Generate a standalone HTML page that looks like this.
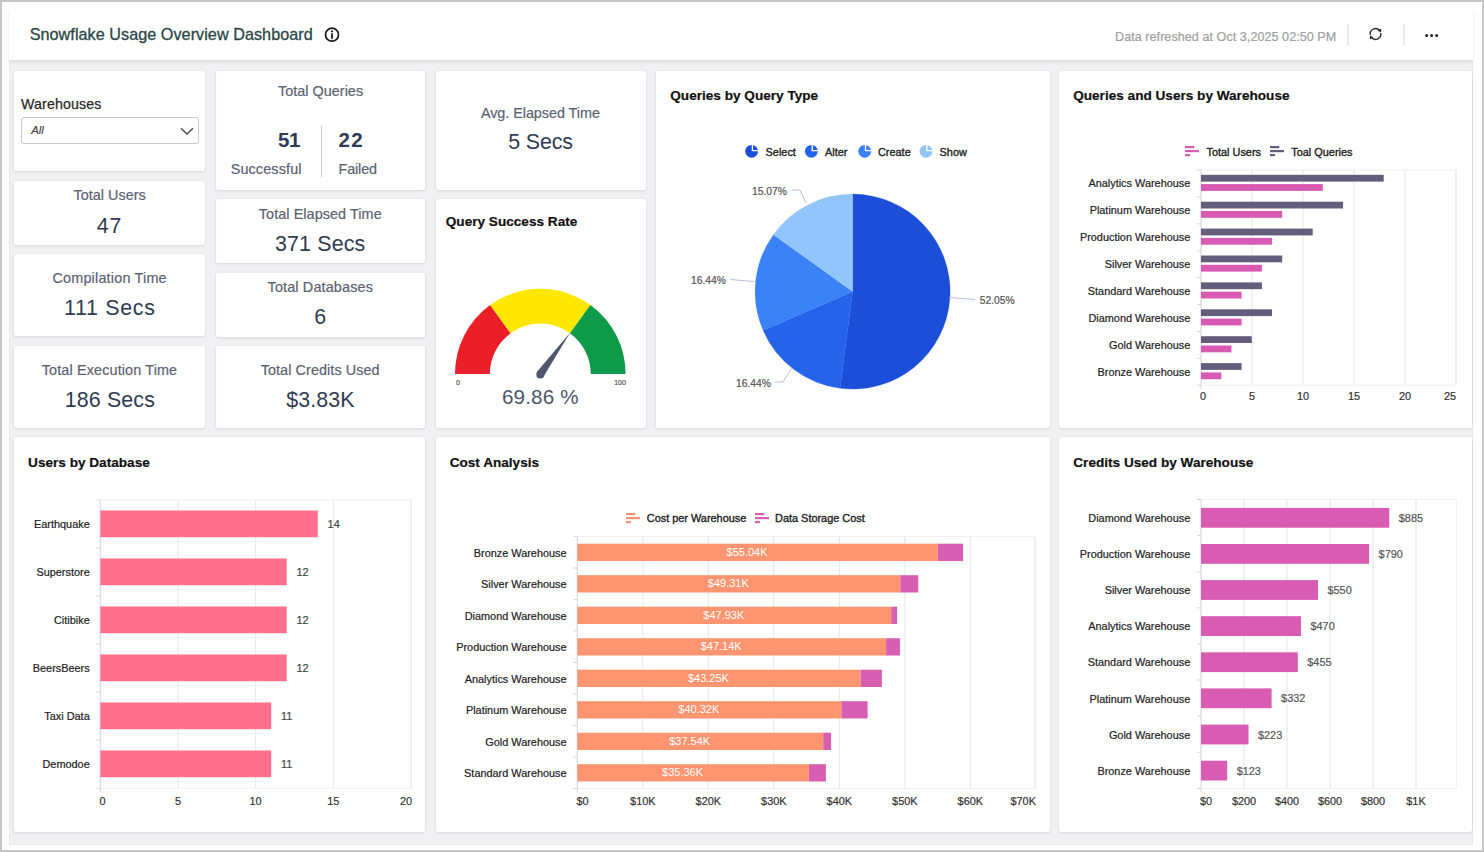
<!DOCTYPE html><html><head><meta charset="utf-8"><style>
html,body{margin:0;padding:0;}
body{width:1484px;height:852px;position:relative;overflow:hidden;background:#fff;font-family:"Liberation Sans", sans-serif;}
.frame{position:absolute;left:0;top:0;width:1480px;height:848px;border:2px solid #c6c6c6;}
.cont{position:absolute;left:9px;top:9px;width:1464px;height:836px;background:#f1f1f4;border:1px solid #e9e9eb;box-sizing:border-box;}
.hdr{position:absolute;left:9px;top:9px;width:1464px;height:51px;background:#fff;box-shadow:0 2px 3px rgba(0,0,0,0.10);}
.card{position:absolute;background:#fff;border-radius:2px;box-shadow:0 1px 3px rgba(0,0,0,0.10),0 0 1px rgba(0,0,0,0.08);}
.t{position:absolute;white-space:nowrap;line-height:1;z-index:2;-webkit-text-stroke:0.2px currentColor;}
svg{position:absolute;left:0;top:0;z-index:1;}
</style></head><body>
<div class="frame"></div>
<div class="cont"></div>
<div class="hdr"></div>

<div class="card" style="left:13.5px;top:71px;width:191.7px;height:100px"></div>
<div class="card" style="left:13.5px;top:181px;width:191.7px;height:64px"></div>
<div class="card" style="left:13.5px;top:254px;width:191.7px;height:82px"></div>
<div class="card" style="left:13.5px;top:346px;width:191.7px;height:82px"></div>
<div class="card" style="left:215.5px;top:71px;width:209.7px;height:118.6px"></div>
<div class="card" style="left:215.5px;top:199px;width:209.7px;height:64px"></div>
<div class="card" style="left:215.5px;top:273px;width:209.7px;height:64px"></div>
<div class="card" style="left:215.5px;top:346px;width:209.7px;height:82px"></div>
<div class="card" style="left:435.5px;top:71px;width:210.0px;height:118.6px"></div>
<div class="card" style="left:435.5px;top:199px;width:210.0px;height:229px"></div>
<div class="card" style="left:655.5px;top:71px;width:394.0px;height:357px"></div>
<div class="card" style="left:1059px;top:71px;width:412.5px;height:357px"></div>
<div class="card" style="left:13.5px;top:437px;width:411.7px;height:394.5px"></div>
<div class="card" style="left:435.5px;top:437px;width:614.0px;height:394.5px"></div>
<div class="card" style="left:1059px;top:437px;width:412.5px;height:394.5px"></div>
<div class="t" style="left:29.7px;top:26.0px;font-size:16.2px;color:#2b4645;font-weight:400;font-style:normal;letter-spacing:0.042px;-webkit-text-stroke:0.3px #2b4645">Snowflake Usage Overview Dashboard</div>
<div class="t" style="left:1115.0px;top:30.5px;font-size:12.6px;color:#a0a0a0;font-weight:400;font-style:normal;letter-spacing:0.041px;">Data refreshed at Oct 3,2025 02:50 PM</div>
<div class="t" style="left:21.1px;top:97.1px;font-size:14.2px;color:#2a2a2a;font-weight:400;font-style:normal;letter-spacing:0.131px;-webkit-text-stroke:0.25px #2a2a2a">Warehouses</div>
<div style="position:absolute;left:21.2px;top:117.4px;width:177.4px;height:26.9px;box-sizing:border-box;border:1px solid #c9c9c9;border-radius:3px;background:#fff"></div>
<div class="t" style="left:31.2px;top:125.2px;font-size:11.4px;color:#444;font-weight:400;font-style:italic;">All</div>
<div class="t" style="left:-190.4px;width:600px;text-align:center;top:188.4px;font-size:14.4px;color:#5b6272;font-weight:400;font-style:normal;letter-spacing:0.042px;">Total Users</div>
<div class="t" style="left:-190.6px;width:600px;text-align:center;top:215.5px;font-size:21.4px;color:#2f3b52;font-weight:400;font-style:normal;letter-spacing:0.704px;-webkit-text-stroke:0;">47</div>
<div class="t" style="left:-190.4px;width:600px;text-align:center;top:271.2px;font-size:14.4px;color:#5b6272;font-weight:400;font-style:normal;letter-spacing:0.198px;">Compilation Time</div>
<div class="t" style="left:-190.2px;width:600px;text-align:center;top:298.2px;font-size:21.4px;color:#2f3b52;font-weight:400;font-style:normal;letter-spacing:0.698px;-webkit-text-stroke:0;">111 Secs</div>
<div class="t" style="left:-190.5px;width:600px;text-align:center;top:362.7px;font-size:14.4px;color:#5b6272;font-weight:400;font-style:normal;letter-spacing:0.135px;">Total Execution Time</div>
<div class="t" style="left:-190.1px;width:600px;text-align:center;top:389.7px;font-size:21.4px;color:#2f3b52;font-weight:400;font-style:normal;letter-spacing:0.130px;-webkit-text-stroke:0;">186 Secs</div>
<div class="t" style="left:20.6px;width:600px;text-align:center;top:84.1px;font-size:14.4px;color:#5b6272;font-weight:400;font-style:normal;letter-spacing:0.018px;">Total Queries</div>
<div class="t" style="right:1184.3px;text-align:right;top:129.8px;font-size:20.5px;color:#2f3b52;font-weight:700;font-style:normal;letter-spacing:-0.601px;-webkit-text-stroke:0;">51</div>
<div class="t" style="left:338.6px;top:129.8px;font-size:20.5px;color:#2f3b52;font-weight:700;font-style:normal;letter-spacing:1.299px;-webkit-text-stroke:0;">22</div>
<div class="t" style="right:1182.4px;text-align:right;top:162.4px;font-size:14.4px;color:#5b6272;font-weight:400;font-style:normal;letter-spacing:0.135px;">Successful</div>
<div class="t" style="left:338.6px;top:162.4px;font-size:14.4px;color:#5b6272;font-weight:400;font-style:normal;letter-spacing:-0.158px;">Failed</div>
<div style="position:absolute;left:320.5px;top:125.7px;width:1px;height:51px;background:#c8c8c8"></div>
<div class="t" style="left:20.3px;width:600px;text-align:center;top:207.1px;font-size:14.4px;color:#5b6272;font-weight:400;font-style:normal;letter-spacing:0.074px;">Total Elapsed Time</div>
<div class="t" style="left:20.2px;width:600px;text-align:center;top:234.0px;font-size:21.4px;color:#2f3b52;font-weight:400;font-style:normal;letter-spacing:0.144px;-webkit-text-stroke:0;">371 Secs</div>
<div class="t" style="left:20.3px;width:600px;text-align:center;top:280.4px;font-size:14.4px;color:#5b6272;font-weight:400;font-style:normal;letter-spacing:0.150px;">Total Databases</div>
<div class="t" style="left:20.5px;width:600px;text-align:center;top:307.3px;font-size:21.4px;color:#2f3b52;font-weight:400;font-style:normal;letter-spacing:0.700px;-webkit-text-stroke:0;">6</div>
<div class="t" style="left:20.2px;width:600px;text-align:center;top:362.9px;font-size:14.4px;color:#5b6272;font-weight:400;font-style:normal;letter-spacing:0.078px;">Total Credits Used</div>
<div class="t" style="left:20.5px;width:600px;text-align:center;top:389.9px;font-size:21.4px;color:#2f3b52;font-weight:400;font-style:normal;letter-spacing:0.094px;-webkit-text-stroke:0;">$3.83K</div>
<div class="t" style="left:240.4px;width:600px;text-align:center;top:106.4px;font-size:14.4px;color:#5b6272;font-weight:400;font-style:normal;letter-spacing:-0.042px;">Avg. Elapsed Time</div>
<div class="t" style="left:240.5px;width:600px;text-align:center;top:132.3px;font-size:21.4px;color:#2f3b52;font-weight:400;font-style:normal;letter-spacing:-0.140px;-webkit-text-stroke:0;">5 Secs</div>
<div class="t" style="left:445.8px;top:214.6px;font-size:13.6px;color:#111;font-weight:700;font-style:normal;">Query Success Rate</div>
<div class="t" style="left:670.3px;top:89.4px;font-size:13.6px;color:#111;font-weight:700;font-style:normal;">Queries by Query Type</div>
<div class="t" style="left:1073.2px;top:89.4px;font-size:13.6px;color:#111;font-weight:700;font-style:normal;">Queries and Users by Warehouse</div>
<div class="t" style="left:28.1px;top:456.0px;font-size:13.6px;color:#111;font-weight:700;font-style:normal;">Users by Database</div>
<div class="t" style="left:449.7px;top:456.0px;font-size:13.6px;color:#111;font-weight:700;font-style:normal;">Cost Analysis</div>
<div class="t" style="left:1073.3px;top:456.0px;font-size:13.6px;color:#111;font-weight:700;font-style:normal;">Credits Used by Warehouse</div>
<div class="t" style="left:158.0px;width:600px;text-align:center;top:378.6px;font-size:7px;color:#555;font-weight:400;font-style:normal;">0</div>
<div class="t" style="left:320.0px;width:600px;text-align:center;top:378.6px;font-size:7px;color:#555;font-weight:400;font-style:normal;">100</div>
<div class="t" style="left:240.4px;width:600px;text-align:center;top:386.8px;font-size:20.6px;color:#4b5568;font-weight:400;font-style:normal;letter-spacing:0.207px;-webkit-text-stroke:0;">69.86 %</div>
<div class="t" style="left:765.6px;top:146.8px;font-size:10.9px;color:#222;font-weight:400;font-style:normal;-webkit-text-stroke:0.35px #222">Select</div>
<div class="t" style="left:825.0px;top:146.8px;font-size:10.9px;color:#222;font-weight:400;font-style:normal;-webkit-text-stroke:0.35px #222">Alter</div>
<div class="t" style="left:878.0px;top:146.8px;font-size:10.9px;color:#222;font-weight:400;font-style:normal;-webkit-text-stroke:0.35px #222">Create</div>
<div class="t" style="left:939.6px;top:146.8px;font-size:10.9px;color:#222;font-weight:400;font-style:normal;-webkit-text-stroke:0.35px #222">Show</div>
<div class="t" style="left:979.7px;top:296.1px;font-size:10.3px;color:#555;font-weight:400;font-style:normal;">52.05%</div>
<div class="t" style="left:691.0px;top:275.6px;font-size:10.3px;color:#555;font-weight:400;font-style:normal;">16.44%</div>
<div class="t" style="left:736.0px;top:378.8px;font-size:10.3px;color:#555;font-weight:400;font-style:normal;">16.44%</div>
<div class="t" style="left:752.0px;top:186.5px;font-size:10.3px;color:#555;font-weight:400;font-style:normal;">15.07%</div>
<div class="t" style="right:293.7px;text-align:right;top:178.2px;font-size:10.9px;color:#222;font-weight:400;font-style:normal;">Analytics Warehouse</div>
<div class="t" style="right:293.7px;text-align:right;top:205.1px;font-size:10.9px;color:#222;font-weight:400;font-style:normal;">Platinum Warehouse</div>
<div class="t" style="right:293.7px;text-align:right;top:232.0px;font-size:10.9px;color:#222;font-weight:400;font-style:normal;">Production Warehouse</div>
<div class="t" style="right:293.7px;text-align:right;top:258.9px;font-size:10.9px;color:#222;font-weight:400;font-style:normal;">Silver Warehouse</div>
<div class="t" style="right:293.7px;text-align:right;top:285.8px;font-size:10.9px;color:#222;font-weight:400;font-style:normal;">Standard Warehouse</div>
<div class="t" style="right:293.7px;text-align:right;top:312.7px;font-size:10.9px;color:#222;font-weight:400;font-style:normal;">Diamond Warehouse</div>
<div class="t" style="right:293.7px;text-align:right;top:339.6px;font-size:10.9px;color:#222;font-weight:400;font-style:normal;">Gold Warehouse</div>
<div class="t" style="right:293.7px;text-align:right;top:366.5px;font-size:10.9px;color:#222;font-weight:400;font-style:normal;">Bronze Warehouse</div>
<div class="t" style="left:903.0px;width:600px;text-align:center;top:391.3px;font-size:10.9px;color:#333;font-weight:400;font-style:normal;">0</div>
<div class="t" style="left:952.0px;width:600px;text-align:center;top:391.3px;font-size:10.9px;color:#333;font-weight:400;font-style:normal;">5</div>
<div class="t" style="left:1003.0px;width:600px;text-align:center;top:391.3px;font-size:10.9px;color:#333;font-weight:400;font-style:normal;">10</div>
<div class="t" style="left:1054.0px;width:600px;text-align:center;top:391.3px;font-size:10.9px;color:#333;font-weight:400;font-style:normal;">15</div>
<div class="t" style="left:1105.0px;width:600px;text-align:center;top:391.3px;font-size:10.9px;color:#333;font-weight:400;font-style:normal;">20</div>
<div class="t" style="left:1150.0px;width:600px;text-align:center;top:391.3px;font-size:10.9px;color:#333;font-weight:400;font-style:normal;">25</div>
<div class="t" style="left:1206.5px;top:146.8px;font-size:10.9px;color:#222;font-weight:400;font-style:normal;-webkit-text-stroke:0.35px #222">Total Users</div>
<div class="t" style="left:1291.3px;top:146.8px;font-size:10.9px;color:#222;font-weight:400;font-style:normal;-webkit-text-stroke:0.35px #222">Toal Queries</div>
<div class="t" style="right:1394.3px;text-align:right;top:519.1px;font-size:10.9px;color:#222;font-weight:400;font-style:normal;">Earthquake</div>
<div class="t" style="left:327.6px;top:519.1px;font-size:10.9px;color:#444;font-weight:400;font-style:normal;">14</div>
<div class="t" style="right:1394.3px;text-align:right;top:567.1px;font-size:10.9px;color:#222;font-weight:400;font-style:normal;">Superstore</div>
<div class="t" style="left:296.5px;top:567.1px;font-size:10.9px;color:#444;font-weight:400;font-style:normal;">12</div>
<div class="t" style="right:1394.3px;text-align:right;top:615.1px;font-size:10.9px;color:#222;font-weight:400;font-style:normal;">Citibike</div>
<div class="t" style="left:296.5px;top:615.1px;font-size:10.9px;color:#444;font-weight:400;font-style:normal;">12</div>
<div class="t" style="right:1394.3px;text-align:right;top:663.1px;font-size:10.9px;color:#222;font-weight:400;font-style:normal;">BeersBeers</div>
<div class="t" style="left:296.5px;top:663.1px;font-size:10.9px;color:#444;font-weight:400;font-style:normal;">12</div>
<div class="t" style="right:1394.3px;text-align:right;top:711.1px;font-size:10.9px;color:#222;font-weight:400;font-style:normal;">Taxi Data</div>
<div class="t" style="left:281.0px;top:711.1px;font-size:10.9px;color:#444;font-weight:400;font-style:normal;">11</div>
<div class="t" style="right:1394.3px;text-align:right;top:759.1px;font-size:10.9px;color:#222;font-weight:400;font-style:normal;">Demodoe</div>
<div class="t" style="left:281.0px;top:759.1px;font-size:10.9px;color:#444;font-weight:400;font-style:normal;">11</div>
<div class="t" style="left:-197.4px;width:600px;text-align:center;top:795.6px;font-size:10.9px;color:#333;font-weight:400;font-style:normal;">0</div>
<div class="t" style="left:-122.0px;width:600px;text-align:center;top:795.6px;font-size:10.9px;color:#333;font-weight:400;font-style:normal;">5</div>
<div class="t" style="left:-44.4px;width:600px;text-align:center;top:795.6px;font-size:10.9px;color:#333;font-weight:400;font-style:normal;">10</div>
<div class="t" style="left:33.3px;width:600px;text-align:center;top:795.6px;font-size:10.9px;color:#333;font-weight:400;font-style:normal;">15</div>
<div class="t" style="left:106.0px;width:600px;text-align:center;top:795.6px;font-size:10.9px;color:#333;font-weight:400;font-style:normal;">20</div>
<div class="t" style="right:917.4px;text-align:right;top:547.8px;font-size:10.9px;color:#222;font-weight:400;font-style:normal;">Bronze Warehouse</div>
<div class="t" style="left:447.1px;width:600px;text-align:center;top:546.8px;font-size:11.0px;color:#fff;font-weight:400;font-style:normal;-webkit-text-stroke:0;">$55.04K</div>
<div class="t" style="right:917.4px;text-align:right;top:579.3px;font-size:10.9px;color:#222;font-weight:400;font-style:normal;">Silver Warehouse</div>
<div class="t" style="left:428.3px;width:600px;text-align:center;top:578.3px;font-size:11.0px;color:#fff;font-weight:400;font-style:normal;-webkit-text-stroke:0;">$49.31K</div>
<div class="t" style="right:917.4px;text-align:right;top:610.8px;font-size:10.9px;color:#222;font-weight:400;font-style:normal;">Diamond Warehouse</div>
<div class="t" style="left:423.8px;width:600px;text-align:center;top:609.8px;font-size:11.0px;color:#fff;font-weight:400;font-style:normal;-webkit-text-stroke:0;">$47.93K</div>
<div class="t" style="right:917.4px;text-align:right;top:642.3px;font-size:10.9px;color:#222;font-weight:400;font-style:normal;">Production Warehouse</div>
<div class="t" style="left:421.2px;width:600px;text-align:center;top:641.3px;font-size:11.0px;color:#fff;font-weight:400;font-style:normal;-webkit-text-stroke:0;">$47.14K</div>
<div class="t" style="right:917.4px;text-align:right;top:673.8px;font-size:10.9px;color:#222;font-weight:400;font-style:normal;">Analytics Warehouse</div>
<div class="t" style="left:408.4px;width:600px;text-align:center;top:672.8px;font-size:11.0px;color:#fff;font-weight:400;font-style:normal;-webkit-text-stroke:0;">$43.25K</div>
<div class="t" style="right:917.4px;text-align:right;top:705.3px;font-size:10.9px;color:#222;font-weight:400;font-style:normal;">Platinum Warehouse</div>
<div class="t" style="left:398.8px;width:600px;text-align:center;top:704.3px;font-size:11.0px;color:#fff;font-weight:400;font-style:normal;-webkit-text-stroke:0;">$40.32K</div>
<div class="t" style="right:917.4px;text-align:right;top:736.8px;font-size:10.9px;color:#222;font-weight:400;font-style:normal;">Gold Warehouse</div>
<div class="t" style="left:389.7px;width:600px;text-align:center;top:735.8px;font-size:11.0px;color:#fff;font-weight:400;font-style:normal;-webkit-text-stroke:0;">$37.54K</div>
<div class="t" style="right:917.4px;text-align:right;top:768.3px;font-size:10.9px;color:#222;font-weight:400;font-style:normal;">Standard Warehouse</div>
<div class="t" style="left:382.6px;width:600px;text-align:center;top:767.3px;font-size:11.0px;color:#fff;font-weight:400;font-style:normal;-webkit-text-stroke:0;">$35.36K</div>
<div class="t" style="left:282.5px;width:600px;text-align:center;top:795.6px;font-size:10.9px;color:#333;font-weight:400;font-style:normal;">$0</div>
<div class="t" style="left:342.8px;width:600px;text-align:center;top:795.6px;font-size:10.9px;color:#333;font-weight:400;font-style:normal;">$10K</div>
<div class="t" style="left:408.3px;width:600px;text-align:center;top:795.6px;font-size:10.9px;color:#333;font-weight:400;font-style:normal;">$20K</div>
<div class="t" style="left:473.8px;width:600px;text-align:center;top:795.6px;font-size:10.9px;color:#333;font-weight:400;font-style:normal;">$30K</div>
<div class="t" style="left:539.3px;width:600px;text-align:center;top:795.6px;font-size:10.9px;color:#333;font-weight:400;font-style:normal;">$40K</div>
<div class="t" style="left:604.8px;width:600px;text-align:center;top:795.6px;font-size:10.9px;color:#333;font-weight:400;font-style:normal;">$50K</div>
<div class="t" style="left:670.3px;width:600px;text-align:center;top:795.6px;font-size:10.9px;color:#333;font-weight:400;font-style:normal;">$60K</div>
<div class="t" style="left:723.2px;width:600px;text-align:center;top:795.6px;font-size:10.9px;color:#333;font-weight:400;font-style:normal;">$70K</div>
<div class="t" style="left:646.8px;top:513.3px;font-size:10.9px;color:#222;font-weight:400;font-style:normal;-webkit-text-stroke:0.35px #222">Cost per Warehouse</div>
<div class="t" style="left:775.1px;top:513.3px;font-size:10.9px;color:#222;font-weight:400;font-style:normal;-webkit-text-stroke:0.35px #222">Data Storage Cost</div>
<div class="t" style="right:293.8px;text-align:right;top:513.0px;font-size:10.9px;color:#222;font-weight:400;font-style:normal;">Diamond Warehouse</div>
<div class="t" style="left:1398.8px;top:512.9px;font-size:10.9px;color:#555;font-weight:400;font-style:normal;">$885</div>
<div class="t" style="right:293.8px;text-align:right;top:549.1px;font-size:10.9px;color:#222;font-weight:400;font-style:normal;">Production Warehouse</div>
<div class="t" style="left:1378.6px;top:549.0px;font-size:10.9px;color:#555;font-weight:400;font-style:normal;">$790</div>
<div class="t" style="right:293.8px;text-align:right;top:585.2px;font-size:10.9px;color:#222;font-weight:400;font-style:normal;">Silver Warehouse</div>
<div class="t" style="left:1327.5px;top:585.1px;font-size:10.9px;color:#555;font-weight:400;font-style:normal;">$550</div>
<div class="t" style="right:293.8px;text-align:right;top:621.3px;font-size:10.9px;color:#222;font-weight:400;font-style:normal;">Analytics Warehouse</div>
<div class="t" style="left:1310.5px;top:621.2px;font-size:10.9px;color:#555;font-weight:400;font-style:normal;">$470</div>
<div class="t" style="right:293.8px;text-align:right;top:657.4px;font-size:10.9px;color:#222;font-weight:400;font-style:normal;">Standard Warehouse</div>
<div class="t" style="left:1307.3px;top:657.3px;font-size:10.9px;color:#555;font-weight:400;font-style:normal;">$455</div>
<div class="t" style="right:293.8px;text-align:right;top:693.5px;font-size:10.9px;color:#222;font-weight:400;font-style:normal;">Platinum Warehouse</div>
<div class="t" style="left:1281.1px;top:693.4px;font-size:10.9px;color:#555;font-weight:400;font-style:normal;">$332</div>
<div class="t" style="right:293.8px;text-align:right;top:729.6px;font-size:10.9px;color:#222;font-weight:400;font-style:normal;">Gold Warehouse</div>
<div class="t" style="left:1258.0px;top:729.5px;font-size:10.9px;color:#555;font-weight:400;font-style:normal;">$223</div>
<div class="t" style="right:293.8px;text-align:right;top:765.7px;font-size:10.9px;color:#222;font-weight:400;font-style:normal;">Bronze Warehouse</div>
<div class="t" style="left:1236.7px;top:765.6px;font-size:10.9px;color:#555;font-weight:400;font-style:normal;">$123</div>
<div class="t" style="left:906.0px;width:600px;text-align:center;top:795.6px;font-size:10.9px;color:#333;font-weight:400;font-style:normal;">$0</div>
<div class="t" style="left:944.0px;width:600px;text-align:center;top:795.6px;font-size:10.9px;color:#333;font-weight:400;font-style:normal;">$200</div>
<div class="t" style="left:987.0px;width:600px;text-align:center;top:795.6px;font-size:10.9px;color:#333;font-weight:400;font-style:normal;">$400</div>
<div class="t" style="left:1030.0px;width:600px;text-align:center;top:795.6px;font-size:10.9px;color:#333;font-weight:400;font-style:normal;">$600</div>
<div class="t" style="left:1073.0px;width:600px;text-align:center;top:795.6px;font-size:10.9px;color:#333;font-weight:400;font-style:normal;">$800</div>
<div class="t" style="left:1116.0px;width:600px;text-align:center;top:795.6px;font-size:10.9px;color:#333;font-weight:400;font-style:normal;">$1K</div>
<svg width="1484" height="852" viewBox="0 0 1484 852">
<circle cx="332" cy="34.7" r="6.5" fill="none" stroke="#1a1a1a" stroke-width="1.7"/>
<rect x="331.1" y="33.3" width="1.8" height="5.5" fill="#1a1a1a"/>
<rect x="331.1" y="30.4" width="1.8" height="1.8" fill="#1a1a1a"/>
<rect x="1347.5" y="24.3" width="1" height="21.2" fill="#d6d6d6"/>
<rect x="1403.6" y="24.3" width="1" height="21.2" fill="#d6d6d6"/>
<g fill="none" stroke="#2a2a2a" stroke-width="1.4">
<path d="M1379.56 30.59 A5.3 5.3 0 0 0 1370.28 34.92"/>
<path d="M1371.44 37.41 A5.3 5.3 0 0 0 1380.72 33.08"/>
</g>
<path d="M1381.2 28.4 L1381.0 32.4 L1377.6 30.6 Z" fill="#222"/>
<path d="M1369.8 39.6 L1370.0 35.6 L1373.4 37.4 Z" fill="#222"/>
<circle cx="1426.6" cy="35.6" r="1.5" fill="#222"/>
<circle cx="1431.6" cy="35.6" r="1.5" fill="#222"/>
<circle cx="1436.6" cy="35.6" r="1.5" fill="#222"/>

<path d="M181 128.2 L187 134 L193 128.2" fill="none" stroke="#444" stroke-width="1.3"/>
<path d="M455.00 374.10 A85.3 85.3 0 0 1 490.16 305.09 L510.62 333.24 A50.5 50.5 0 0 0 489.80 374.10 Z" fill="#ea1f28"/>
<path d="M490.16 305.09 A85.3 85.3 0 0 1 590.44 305.09 L569.98 333.24 A50.5 50.5 0 0 0 510.62 333.24 Z" fill="#ffe700"/>
<path d="M590.44 305.09 A85.3 85.3 0 0 1 625.60 374.10 L590.80 374.10 A50.5 50.5 0 0 0 569.98 333.24 Z" fill="#0e9a49"/>
<path d="M537.05 371.76 L570.39 332.30 L543.55 376.44 Z" fill="#4f576e"/>
<circle cx="540.3" cy="374.40000000000003" r="4.0" fill="#4f576e"/>
<path d="M852.6 291.6 L852.60 194.10 A97.5 97.5 0 1 1 840.08 388.29 Z" fill="#1d4ed8" stroke="#1d4ed8" stroke-width="0.3"/>
<path d="M852.6 291.6 L840.08 388.29 A97.5 97.5 0 0 1 763.14 330.38 Z" fill="#2563eb" stroke="#2563eb" stroke-width="0.3"/>
<path d="M852.6 291.6 L763.14 330.38 A97.5 97.5 0 0 1 773.47 234.64 Z" fill="#3b82f6" stroke="#3b82f6" stroke-width="0.3"/>
<path d="M852.6 291.6 L773.47 234.64 A97.5 97.5 0 0 1 852.60 194.10 Z" fill="#93c5fd" stroke="#93c5fd" stroke-width="0.3"/>
<circle cx="751.6" cy="151.3" r="6.4" fill="#1d4ed8"/>
<path d="M752.4 143.9 L752.4 150.70000000000002 L759.0 150.70000000000002" fill="none" stroke="#fff" stroke-width="1.3"/>
<circle cx="811.4" cy="151.3" r="6.4" fill="#2563eb"/>
<path d="M812.1999999999999 143.9 L812.1999999999999 150.70000000000002 L818.8 150.70000000000002" fill="none" stroke="#fff" stroke-width="1.3"/>
<circle cx="864.7" cy="151.3" r="6.4" fill="#3b82f6"/>
<path d="M865.5 143.9 L865.5 150.70000000000002 L872.1 150.70000000000002" fill="none" stroke="#fff" stroke-width="1.3"/>
<circle cx="926.0" cy="151.3" r="6.4" fill="#93c5fd"/>
<path d="M926.8 143.9 L926.8 150.70000000000002 L933.4 150.70000000000002" fill="none" stroke="#fff" stroke-width="1.3"/>
<path d="M949 297.5 L975 299.5" stroke="#b7bfe0" stroke-width="1" fill="none"/>
<path d="M730.5 279.5 L754 281.5" stroke="#b7bfe0" stroke-width="1" fill="none"/>
<path d="M775 382 L783 382 L792 368" stroke="#b7bfe0" stroke-width="1" fill="none"/>
<path d="M792 190 L800 190 L806 203" stroke="#b7bfe0" stroke-width="1" fill="none"/>
<rect x="1201" y="170" width="255" height="215.2" fill="none" stroke="#f0f0f3" stroke-width="1"/>
<rect x="1251.5" y="170" width="1" height="215.2" fill="#e6e6ec"/>
<rect x="1302.5" y="170" width="1" height="215.2" fill="#e6e6ec"/>
<rect x="1353.5" y="170" width="1" height="215.2" fill="#e6e6ec"/>
<rect x="1404.5" y="170" width="1" height="215.2" fill="#e6e6ec"/>
<rect x="1455.5" y="170" width="1" height="215.2" fill="#e6e6ec"/>
<rect x="1200.5" y="170" width="1" height="219.2" fill="#d8d8de"/>
<rect x="1197" y="169.5" width="4" height="1" fill="#d8d8de"/>
<rect x="1201" y="174.8" width="182.7" height="6.8" fill="#645e7c"/>
<rect x="1201" y="184.1" width="121.8" height="6.8" fill="#d85ab3"/>
<rect x="1197" y="196.4" width="4" height="1" fill="#d8d8de"/>
<rect x="1201" y="201.7" width="142.1" height="6.8" fill="#645e7c"/>
<rect x="1201" y="211.0" width="81.2" height="6.8" fill="#d85ab3"/>
<rect x="1197" y="223.3" width="4" height="1" fill="#d8d8de"/>
<rect x="1201" y="228.6" width="111.7" height="6.8" fill="#645e7c"/>
<rect x="1201" y="237.9" width="71.0" height="6.8" fill="#d85ab3"/>
<rect x="1197" y="250.2" width="4" height="1" fill="#d8d8de"/>
<rect x="1201" y="255.5" width="81.2" height="6.8" fill="#645e7c"/>
<rect x="1201" y="264.8" width="60.9" height="6.8" fill="#d85ab3"/>
<rect x="1197" y="277.1" width="4" height="1" fill="#d8d8de"/>
<rect x="1201" y="282.4" width="60.9" height="6.8" fill="#645e7c"/>
<rect x="1201" y="291.7" width="40.6" height="6.8" fill="#d85ab3"/>
<rect x="1197" y="304.0" width="4" height="1" fill="#d8d8de"/>
<rect x="1201" y="309.3" width="71.0" height="6.8" fill="#645e7c"/>
<rect x="1201" y="318.6" width="40.6" height="6.8" fill="#d85ab3"/>
<rect x="1197" y="330.9" width="4" height="1" fill="#d8d8de"/>
<rect x="1201" y="336.2" width="50.8" height="6.8" fill="#645e7c"/>
<rect x="1201" y="345.5" width="30.5" height="6.8" fill="#d85ab3"/>
<rect x="1197" y="357.79999999999995" width="4" height="1" fill="#d8d8de"/>
<rect x="1201" y="363.1" width="40.6" height="6.8" fill="#645e7c"/>
<rect x="1201" y="372.4" width="20.3" height="6.8" fill="#d85ab3"/>
<rect x="1197" y="384.7" width="4" height="1" fill="#d8d8de"/>
<rect x="1185" y="146" width="9.3" height="2.2" fill="#d85ab3"/><rect x="1185" y="150" width="14" height="2.2" fill="#d85ab3"/><rect x="1185" y="154" width="5" height="2.2" fill="#d85ab3"/>
<rect x="1270" y="146" width="9.3" height="2.2" fill="#645e7c"/><rect x="1270" y="150" width="14" height="2.2" fill="#645e7c"/><rect x="1270" y="154" width="5" height="2.2" fill="#645e7c"/>
<rect x="100.3" y="500" width="310.7" height="288.29999999999995" fill="none" stroke="#f0f0f3" stroke-width="1"/>
<rect x="177.475" y="500" width="1" height="288.29999999999995" fill="#e6e6ec"/>
<rect x="255.14999999999998" y="500" width="1" height="288.29999999999995" fill="#e6e6ec"/>
<rect x="332.825" y="500" width="1" height="288.29999999999995" fill="#e6e6ec"/>
<rect x="410.5" y="500" width="1" height="288.29999999999995" fill="#e6e6ec"/>
<rect x="99.8" y="500" width="1" height="292.29999999999995" fill="#d8d8de"/>
<rect x="96.3" y="499.5" width="4" height="1" fill="#d8d8de"/>
<rect x="100.3" y="510.5" width="217.5" height="26.7" fill="#ff708e"/>
<rect x="96.3" y="547.5" width="4" height="1" fill="#d8d8de"/>
<rect x="100.3" y="558.5" width="186.4" height="26.7" fill="#ff708e"/>
<rect x="96.3" y="595.5" width="4" height="1" fill="#d8d8de"/>
<rect x="100.3" y="606.5" width="186.4" height="26.7" fill="#ff708e"/>
<rect x="96.3" y="643.5" width="4" height="1" fill="#d8d8de"/>
<rect x="100.3" y="654.5" width="186.4" height="26.7" fill="#ff708e"/>
<rect x="96.3" y="691.5" width="4" height="1" fill="#d8d8de"/>
<rect x="100.3" y="702.5" width="170.9" height="26.7" fill="#ff708e"/>
<rect x="96.3" y="739.5" width="4" height="1" fill="#d8d8de"/>
<rect x="100.3" y="750.5" width="170.9" height="26.7" fill="#ff708e"/>
<rect x="96.3" y="787.8" width="4" height="1" fill="#d8d8de"/>
<rect x="577.3" y="536.5" width="457.10000000000014" height="252.0" fill="none" stroke="#f0f0f3" stroke-width="1"/>
<rect x="642.3" y="536.5" width="1" height="252.0" fill="#e6e6ec"/>
<rect x="707.8" y="536.5" width="1" height="252.0" fill="#e6e6ec"/>
<rect x="773.3" y="536.5" width="1" height="252.0" fill="#e6e6ec"/>
<rect x="838.8" y="536.5" width="1" height="252.0" fill="#e6e6ec"/>
<rect x="904.3" y="536.5" width="1" height="252.0" fill="#e6e6ec"/>
<rect x="969.8" y="536.5" width="1" height="252.0" fill="#e6e6ec"/>
<rect x="1035.3" y="536.5" width="1" height="252.0" fill="#e6e6ec"/>
<rect x="576.8" y="536.5" width="1" height="256.0" fill="#d8d8de"/>
<rect x="573.3" y="536.0" width="4" height="1" fill="#d8d8de"/>
<rect x="577.3" y="543.7" width="360.5" height="17.3" fill="#ff9570"/>
<rect x="937.8" y="543.7" width="25.2" height="17.3" fill="#d75eb0"/>
<rect x="573.3" y="567.5" width="4" height="1" fill="#d8d8de"/>
<rect x="577.3" y="575.2" width="323.0" height="17.3" fill="#ff9570"/>
<rect x="900.3" y="575.2" width="18.0" height="17.3" fill="#d75eb0"/>
<rect x="573.3" y="599.0" width="4" height="1" fill="#d8d8de"/>
<rect x="577.3" y="606.7" width="313.9" height="17.3" fill="#ff9570"/>
<rect x="891.2" y="606.7" width="5.9" height="17.3" fill="#d75eb0"/>
<rect x="573.3" y="630.5" width="4" height="1" fill="#d8d8de"/>
<rect x="577.3" y="638.2" width="308.8" height="17.3" fill="#ff9570"/>
<rect x="886.1" y="638.2" width="13.8" height="17.3" fill="#d75eb0"/>
<rect x="573.3" y="662.0" width="4" height="1" fill="#d8d8de"/>
<rect x="577.3" y="669.7" width="283.3" height="17.3" fill="#ff9570"/>
<rect x="860.6" y="669.7" width="21.3" height="17.3" fill="#d75eb0"/>
<rect x="573.3" y="693.5" width="4" height="1" fill="#d8d8de"/>
<rect x="577.3" y="701.2" width="264.1" height="17.3" fill="#ff9570"/>
<rect x="841.4" y="701.2" width="26.2" height="17.3" fill="#d75eb0"/>
<rect x="573.3" y="725.0" width="4" height="1" fill="#d8d8de"/>
<rect x="577.3" y="732.7" width="245.9" height="17.3" fill="#ff9570"/>
<rect x="823.2" y="732.7" width="7.9" height="17.3" fill="#d75eb0"/>
<rect x="573.3" y="756.5" width="4" height="1" fill="#d8d8de"/>
<rect x="577.3" y="764.2" width="231.6" height="17.3" fill="#ff9570"/>
<rect x="808.9" y="764.2" width="17.0" height="17.3" fill="#d75eb0"/>
<rect x="573.3" y="788.0" width="4" height="1" fill="#d8d8de"/>
<rect x="626" y="513" width="9.3" height="2.2" fill="#ff9570"/><rect x="626" y="517" width="14" height="2.2" fill="#ff9570"/><rect x="626" y="521" width="5" height="2.2" fill="#ff9570"/>
<rect x="755" y="513" width="9.3" height="2.2" fill="#d75eb0"/><rect x="755" y="517" width="14" height="2.2" fill="#d75eb0"/><rect x="755" y="521" width="5" height="2.2" fill="#d75eb0"/>
<rect x="1201" y="499.5" width="255.29999999999995" height="288.9" fill="none" stroke="#f0f0f3" stroke-width="1"/>
<rect x="1243.5" y="499.5" width="1" height="288.9" fill="#e6e6ec"/>
<rect x="1286.5" y="499.5" width="1" height="288.9" fill="#e6e6ec"/>
<rect x="1329.5" y="499.5" width="1" height="288.9" fill="#e6e6ec"/>
<rect x="1372.5" y="499.5" width="1" height="288.9" fill="#e6e6ec"/>
<rect x="1415.5" y="499.5" width="1" height="288.9" fill="#e6e6ec"/>
<rect x="1200.5" y="499.5" width="1" height="292.9" fill="#d8d8de"/>
<rect x="1197" y="499.0" width="4" height="1" fill="#d8d8de"/>
<rect x="1201" y="507.9" width="188.3" height="19.8" fill="#d85db2"/>
<rect x="1197" y="535.1" width="4" height="1" fill="#d8d8de"/>
<rect x="1201" y="544.0" width="168.1" height="19.8" fill="#d85db2"/>
<rect x="1197" y="571.2" width="4" height="1" fill="#d8d8de"/>
<rect x="1201" y="580.1" width="117.0" height="19.8" fill="#d85db2"/>
<rect x="1197" y="607.3" width="4" height="1" fill="#d8d8de"/>
<rect x="1201" y="616.2" width="100.0" height="19.8" fill="#d85db2"/>
<rect x="1197" y="643.4" width="4" height="1" fill="#d8d8de"/>
<rect x="1201" y="652.3" width="96.8" height="19.8" fill="#d85db2"/>
<rect x="1197" y="679.5" width="4" height="1" fill="#d8d8de"/>
<rect x="1201" y="688.4" width="70.6" height="19.8" fill="#d85db2"/>
<rect x="1197" y="715.7" width="4" height="1" fill="#d8d8de"/>
<rect x="1201" y="724.6" width="47.5" height="19.8" fill="#d85db2"/>
<rect x="1197" y="751.8" width="4" height="1" fill="#d8d8de"/>
<rect x="1201" y="760.7" width="26.2" height="19.8" fill="#d85db2"/>
<rect x="1197" y="787.9" width="4" height="1" fill="#d8d8de"/>
</svg>
</body></html>
